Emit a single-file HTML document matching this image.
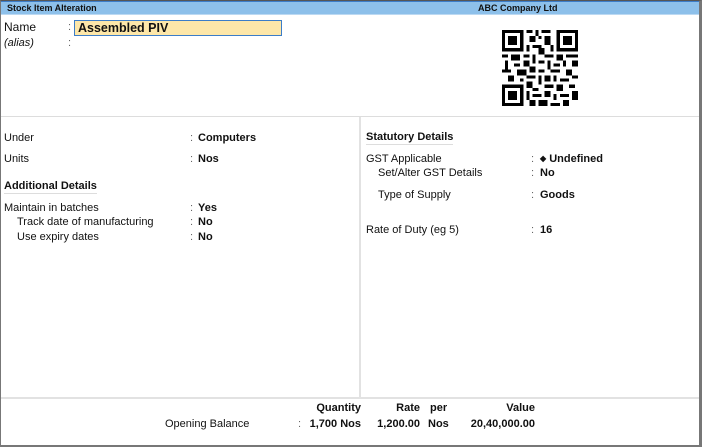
<!DOCTYPE html>
<html><head><meta charset="utf-8"><style>
*{margin:0;padding:0;box-sizing:border-box}
body{width:702px;height:447px;background:#fff;font-family:"Liberation Sans",Arial,sans-serif;font-size:11px;color:#111;position:relative;overflow:hidden}
.a{position:absolute;white-space:nowrap;line-height:15px}
.r{position:absolute;white-space:nowrap;text-align:right;font-weight:bold;line-height:15px}
b{font-weight:bold}
.c{color:#666}
</style></head><body>
<div class="a" style="left:0;top:0;width:702px;height:447px;border-left:1px solid #777;border-right:3px solid #777;border-bottom:2px solid #777;border-top:1px solid #555"></div>
<div class="a" style="left:1px;top:1px;width:698px;height:14px;background:#8dc0ea;border-top:1px solid #3c7dc8;border-bottom:1px solid #bcd9f2"></div>
<div class="a" style="left:7px;top:2px;font-size:9px;font-weight:bold;line-height:12px">Stock Item Alteration</div>
<div class="a" style="left:478px;top:2px;font-size:9px;font-weight:bold;line-height:12px">ABC Company Ltd</div>

<div class="a" style="left:4px;top:20px;font-size:12px">Name</div>
<div class="a c" style="left:68px;top:20px">:</div>
<div class="a" style="left:74px;top:20px;width:208px;height:16px;background:#fde7a9;border:1px solid #3c7dc8;font-weight:bold;padding-left:3px;line-height:14px;font-size:12.5px">Assembled PIV</div>
<div class="a" style="left:4px;top:36px;font-style:italic">(alias)</div>
<div class="a c" style="left:68px;top:36px">:</div>

<svg class="a" style="left:502px;top:30px" width="76" height="76" viewBox="0 0 25 25" shape-rendering="crispEdges">
<g fill="#000">
<path d="M0 0h7v7H0zM18 0h7v7h-7zM0 18h7v7H0z"/>
</g>
<g fill="#fff"><path d="M1 1h5v5H1zM19 1h5v5h-5zM1 19h5v5H1z"/></g>
<g fill="#000"><path d="M2 2h3v3H2zM20 2h3v3h-3zM2 20h3v3H2z"/>
<path d="M8 0h2v1H8zM11 0h1v2h-1zM13 0h3v1h-3zM9 2h2v2H9zM12 2h1v1h-1zM14 2h2v3h-2zM8 5h1v2H8zM10 5h3v1h-3zM16 5h1v2h-1zM12 6h2v2h-2z
M0 8h2v1H0zM3 8h3v2H3zM7 8h2v1H7zM10 8h1v3h-1zM14 8h3v1h-3zM18 8h2v2h-2zM21 8h4v1h-4z
M1 10h1v3H1zM4 11h2v1H4zM7 10h2v2H7zM12 10h2v1h-2zM15 10h1v3h-1zM17 11h2v1h-2zM20 10h1v2h-1zM23 10h2v2h-2z
M0 13h3v1H0zM5 13h3v2H5zM9 12h2v2H9zM12 13h2v1h-2zM16 13h3v1h-3zM21 13h2v2h-2z
M2 15h2v2H2zM6 16h1v1H6zM8 15h3v1H8zM12 15h1v3h-1zM14 15h2v2h-2zM17 15h1v2h-1zM19 16h3v1h-3zM23 15h2v1h-2z
M8 17h2v2H8zM14 18h3v1h-3zM18 18h2v2h-2zM22 18h2v1h-2zM10 19h2v1h-2z
M8 20h1v3H8zM10 21h3v1h-3zM14 20h2v2h-2zM17 21h1v2h-1zM19 21h3v1h-3zM23 20h2v3h-2z
M9 23h2v2H9zM12 23h3v2h-3zM16 24h3v1h-3zM20 23h2v2h-2z"/></g>
</svg>

<div class="a" style="left:1px;top:116px;width:698px;height:1px;background:#ddd"></div>
<div class="a" style="left:359px;top:117px;width:2px;height:281px;background:#e2e2e2"></div>
<div class="a" style="left:1px;top:397px;width:698px;height:2px;background:#e2e2e2"></div>

<div class="a" style="left:4px;top:131px">Under</div><div class="a c" style="left:190px;top:131px">:</div><div class="a" style="left:198px;top:131px"><b>Computers</b></div>
<div class="a" style="left:4px;top:152px">Units</div><div class="a c" style="left:190px;top:152px">:</div><div class="a" style="left:198px;top:152px"><b>Nos</b></div>
<div class="a" style="left:4px;top:179px;font-weight:bold;border-bottom:1px solid #ddd;line-height:14px">Additional Details</div>
<div class="a" style="left:4px;top:201px">Maintain in batches</div><div class="a c" style="left:190px;top:201px">:</div><div class="a" style="left:198px;top:201px"><b>Yes</b></div>
<div class="a" style="left:17px;top:215px">Track date of manufacturing</div><div class="a c" style="left:190px;top:215px">:</div><div class="a" style="left:198px;top:215px"><b>No</b></div>
<div class="a" style="left:17px;top:230px">Use expiry dates</div><div class="a c" style="left:190px;top:230px">:</div><div class="a" style="left:198px;top:230px"><b>No</b></div>

<div class="a" style="left:366px;top:130px;font-weight:bold;border-bottom:1px solid #ddd;line-height:14px">Statutory Details</div>
<div class="a" style="left:366px;top:152px">GST Applicable</div><div class="a c" style="left:531px;top:152px">:</div><div class="a" style="left:540px;top:152px"><b><span style="font-size:8px;position:relative;top:-1px">&#9670;</span> Undefined</b></div>
<div class="a" style="left:378px;top:166px">Set/Alter GST Details</div><div class="a c" style="left:531px;top:166px">:</div><div class="a" style="left:540px;top:166px"><b>No</b></div>
<div class="a" style="left:378px;top:188px">Type of Supply</div><div class="a c" style="left:531px;top:188px">:</div><div class="a" style="left:540px;top:188px"><b>Goods</b></div>
<div class="a" style="left:366px;top:223px">Rate of Duty (eg 5)</div><div class="a c" style="left:531px;top:223px">:</div><div class="a" style="left:540px;top:223px"><b>16</b></div>

<div class="r" style="right:341px;top:401px">Quantity</div>
<div class="r" style="right:282px;top:401px">Rate</div>
<div class="a" style="left:430px;top:401px;font-weight:bold">per</div>
<div class="r" style="right:167px;top:401px">Value</div>
<div class="a" style="left:165px;top:417px">Opening Balance</div>
<div class="a c" style="left:298px;top:417px">:</div>
<div class="r" style="right:341px;top:417px">1,700 Nos</div>
<div class="r" style="right:282px;top:417px">1,200.00</div>
<div class="a" style="left:428px;top:417px;font-weight:bold">Nos</div>
<div class="r" style="right:167px;top:417px">20,40,000.00</div>
</body></html>
